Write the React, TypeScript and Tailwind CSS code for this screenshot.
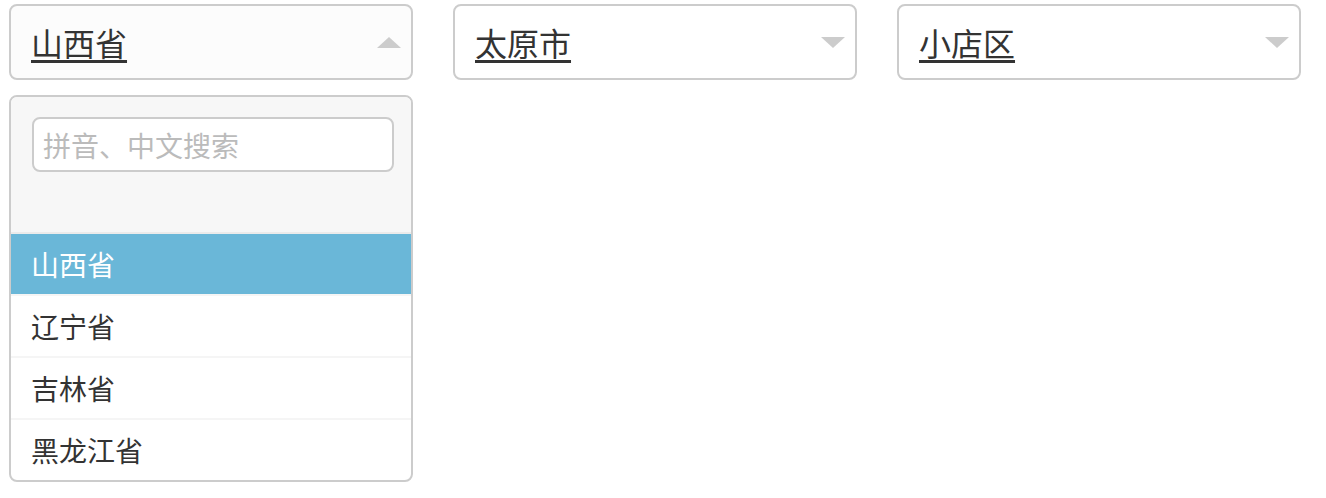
import { useState } from "react";

const FONT = { fontFamily: '"Noto Sans CJK SC", "Noto Sans", sans-serif' };

const provinces = ["山西省", "辽宁省", "吉林省", "黑龙江省"];

function Caret({ up }: { up?: boolean }) {
    return up ? (
        <span className="h-0 w-0 border-x-[12px] border-b-[11px] border-x-transparent border-b-[#cccccc]" />
    ) : (
        <span className="h-0 w-0 border-x-[12px] border-t-[11px] border-x-transparent border-t-[#cccccc]" />
    );
}

function SelectBox({ value, open }: { value: string; open?: boolean }) {
    return (
        <div
            className={`flex h-[76px] w-[404px] items-center justify-between rounded-lg border-2 border-[#cccccc] pl-[20px] pr-[10px] ${
                open ? "bg-[#fcfcfc]" : "bg-white"
            }`}
        >
            <a className="text-[32px] leading-none text-[#333333] underline decoration-[3px] underline-offset-[4px]">
                {value}
            </a>
            <Caret up={open} />
        </div>
    );
}

export default function App() {
    const [selected] = useState(0);

    return (
        <div className="min-h-[498px] bg-white pt-[4px] pl-[9px]" style={FONT}>
            <div className="flex gap-10">
                {/* Province */}
                <div className="flex flex-col gap-[15px]">
                    <SelectBox value="山西省" open />

                    {/* Dropdown */}
                    <div className="w-[404px] overflow-hidden rounded-lg border-2 border-[#cccccc] bg-white">
                        <div className="h-[137px] border-b-2 border-[#ebebeb] bg-[#f7f7f7] pt-[20px] pl-[21px] pr-[17px]">
                            <input
                                placeholder="拼音、中文搜索"
                                className="h-[55px] w-full rounded-lg border-2 border-[#cccccc] bg-white pl-[9px] text-[28px] text-[#333333] outline-none placeholder:text-[#bbbbbb]"
                            />
                        </div>
                        <ul>
                            {provinces.map((p, i) => (
                                <li
                                    key={p}
                                    className={`flex h-[60px] items-center pl-[20px] text-[28px] leading-none ${
                                        i === selected
                                            ? "bg-[#6ab7d8] text-white"
                                            : "box-content border-t-2 border-[#f5f5f5] text-[#333333]"
                                    }`}
                                >
                                    {p}
                                </li>
                            ))}
                        </ul>
                    </div>
                </div>

                {/* City */}
                <div>
                    <SelectBox value="太原市" />
                </div>

                {/* District */}
                <div>
                    <SelectBox value="小店区" />
                </div>
            </div>
        </div>
    );
}
